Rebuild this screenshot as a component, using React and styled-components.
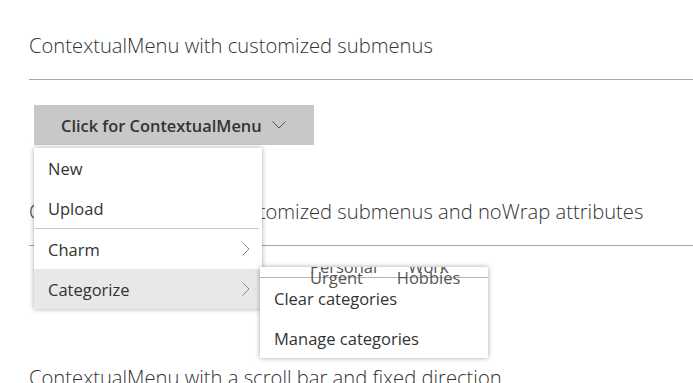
import React from 'react';
import styled, { createGlobalStyle } from 'styled-components';

const GlobalStyle = createGlobalStyle`
  body {
    margin: 0;
    background: #ffffff;
    font-family: 'Open Sans', 'Noto Sans', sans-serif;
    color: #333333;
    overflow: hidden;
  }
`;

const Page = styled.div`
  padding-left: 29px;
`;

const Section = styled.section`
  padding-top: 31px;
`;

const Title = styled.h2`
  margin: 0;
  font-size: 20.2px;
  font-weight: 300;
  line-height: 28px;
  color: #333333;
  padding-bottom: 20px;
  border-bottom: 1px solid #a6a6a6;
  white-space: nowrap;
`;

const Content = styled.div`
  height: 86px;
  padding: 25px 0 0 5px;
  box-sizing: border-box;
`;

const Anchor = styled.div`
  position: relative;
  display: inline-block;
  z-index: 10;
`;

const MenuButton = styled.button`
  display: flex;
  align-items: center;
  gap: 10px;
  width: 280px;
  height: 40px;
  padding: 0 0 0 27px;
  border: none;
  background: #c8c8c8;
  font-family: 'Open Sans', 'Noto Sans', sans-serif;
  font-size: 16.4px;
  font-weight: 600;
  color: #333333;
  white-space: nowrap;
  cursor: pointer;
`;

const Menu = styled.ul`
  position: absolute;
  top: calc(100% + 3px);
  left: 0;
  width: 228px;
  margin: 0;
  padding: 0;
  list-style: none;
  background: #ffffff;
  box-shadow: 0 0 5px rgba(0, 0, 0, 0.35);
`;

const Item = styled.li`
  position: relative;
  display: flex;
  align-items: center;
  justify-content: space-between;
  height: 40px;
  padding: 0 12px 0 14px;
  font-size: 16.5px;
  color: #333333;
  background: ${(p) => (p.$active ? '#e8e8e8' : 'transparent')};
  white-space: nowrap;
`;

const Divider = styled.li`
  height: 1px;
  margin-right: 3px;
  background: #c8c8c8;
`;

const SubMenu = styled.ul`
  position: absolute;
  top: -2px;
  left: calc(100% - 2px);
  width: 228px;
  margin: 0;
  padding: 0;
  list-style: none;
  background: #ffffff;
  box-shadow: 0 0 5px rgba(0, 0, 0, 0.35);
  overflow: hidden;
`;

const SubHeader = styled.li`
  display: flow-root;
  height: 10px;
  border-bottom: 1px solid #b4b4b4;
`;

const CategoryGrid = styled.div`
  display: grid;
  grid-template-columns: 68px 63px;
  grid-template-rows: 11px 20px;
  grid-auto-flow: column;
  column-gap: 19px;
  margin-top: -10px;
  padding-left: 50px;
`;

const Category = styled.span`
  justify-self: ${(p) => p.$align || 'start'};
  font-size: 16.5px;
  line-height: 20px;
  height: 20px;
  color: #555555;
  white-space: nowrap;
`;

const Chevron = ({ dir }) => (
  <svg
    width={dir === 'down' ? 14 : 8}
    height={dir === 'down' ? 8 : 14}
    viewBox={dir === 'down' ? '0 0 14 8' : '0 0 8 14'}
    fill="none"
    stroke={dir === 'down' ? '#555' : '#8a8a8a'}
    strokeWidth="1"
  >
    {dir === 'down' ? <path d="M0.5 0.5 L7 7 L13.5 0.5" /> : <path d="M0.5 0.5 L7 7 L0.5 13.5" />}
  </svg>
);

const App = () => (
  <>
    <GlobalStyle />
    <Page>
      <Section>
        <Title>ContextualMenu with customized submenus</Title>
        <Content>
          <Anchor>
            <MenuButton>
              Click for ContextualMenu
              <Chevron dir="down" />
            </MenuButton>
            <Menu>
              <Item>New</Item>
              <Item>Upload</Item>
              <Divider />
              <Item>
                Charm
                <Chevron dir="right" />
              </Item>
              <Item $active>
                Categorize
                <Chevron dir="right" />
                <SubMenu>
                  <SubHeader>
                    <CategoryGrid>
                      <Category>Personal</Category>
                      <Category>Urgent</Category>
                      <Category $align="center">Work</Category>
                      <Category $align="center">Hobbies</Category>
                    </CategoryGrid>
                  </SubHeader>
                  <Item>Clear categories</Item>
                  <Item>Manage categories</Item>
                </SubMenu>
              </Item>
            </Menu>
          </Anchor>
        </Content>
      </Section>
      <Section>
        <Title>ContextualMenu with customized submenus and noWrap attributes</Title>
        <Content />
      </Section>
      <Section>
        <Title>ContextualMenu with a scroll bar and fixed direction</Title>
        <Content />
      </Section>
    </Page>
  </>
);

export default App;
